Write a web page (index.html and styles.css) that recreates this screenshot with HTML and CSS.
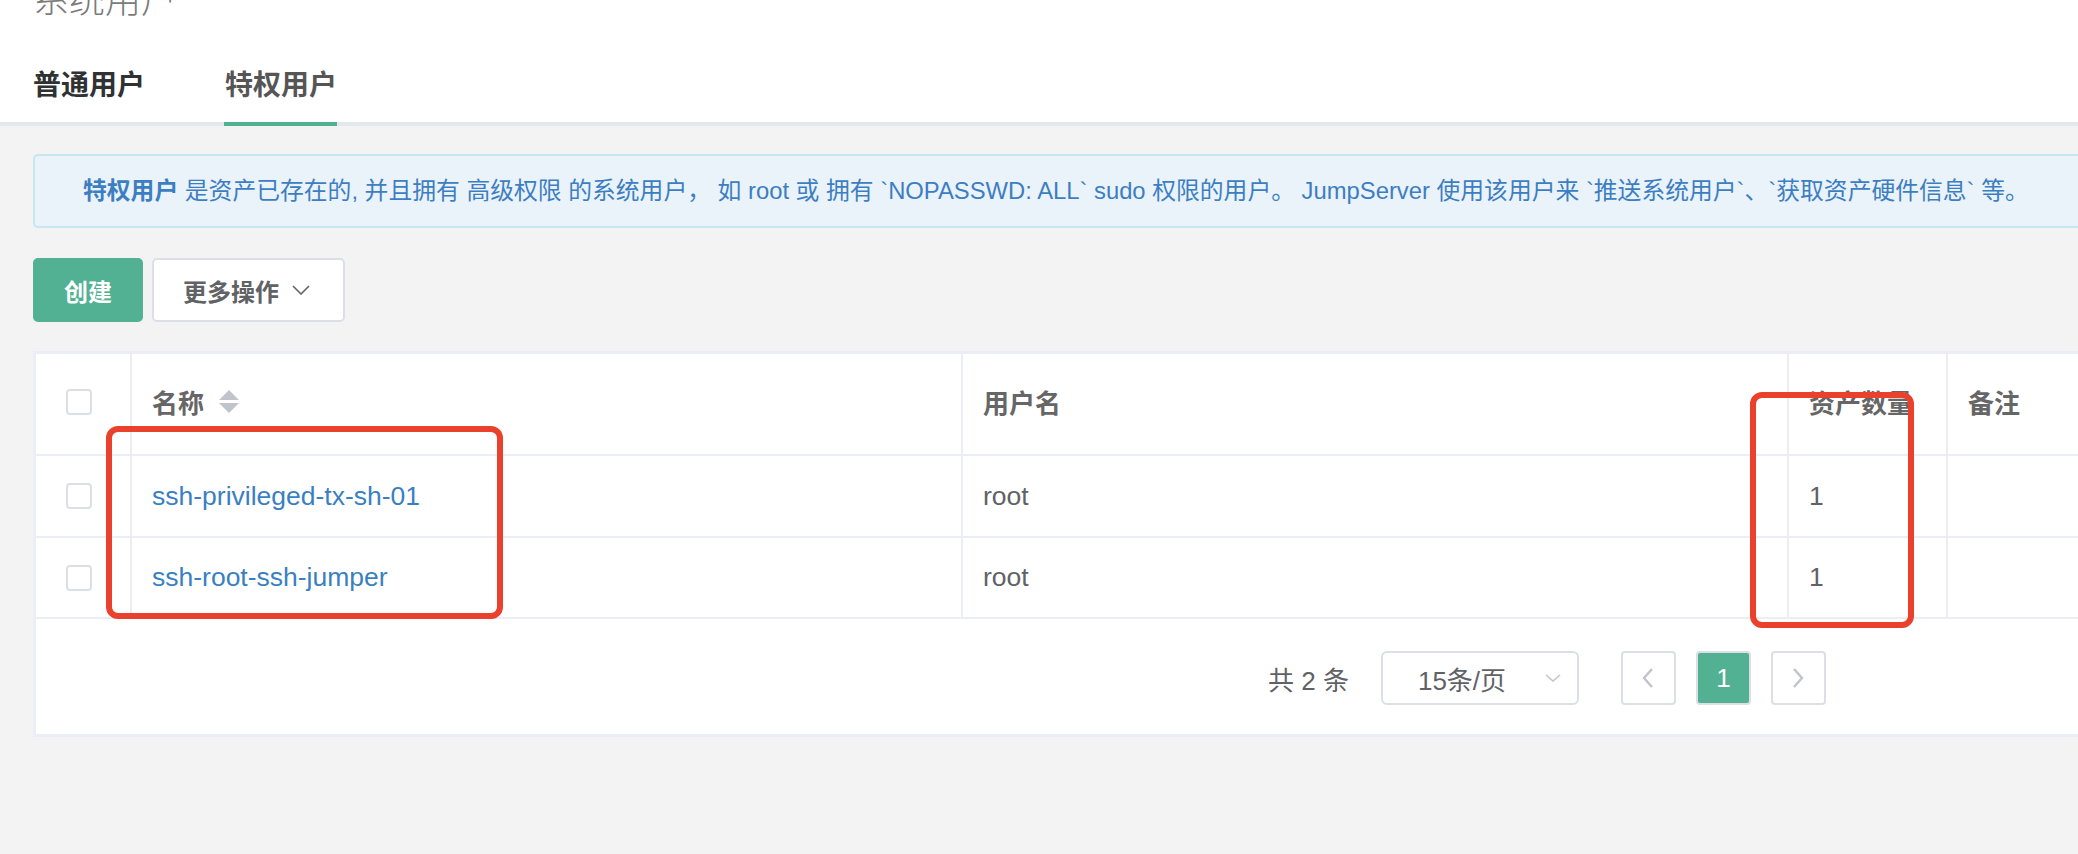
FILE: index.html
```html
<!DOCTYPE html>
<html lang="zh-CN">
  <head>
    <meta charset="UTF-8" />
    <title>系统用户</title>
    <link rel="stylesheet" href="styles.css">
  </head>
  <body>
    <div class="page">
      <header class="page-header">
        <h2 class="page-title">系统用户</h2>
        <nav class="tabs">
          <a class="tab">普通用户</a>
          <a class="tab active">特权用户</a>
        </nav>
      </header>

      <main class="content">
        <div class="alert">
          <strong>特权用户</strong> 是资产已存在的, 并且拥有 高级权限 的系统用户， 如 root 或 拥有 `NOPASSWD: ALL` sudo 权限的用户。 JumpServer 使用该用户来 `推送系统用户`、`获取资产硬件信息` 等。
        </div>

        <div class="actions">
          <button class="btn btn-primary">创建</button>
          <button class="btn btn-default">
            更多操作
            <svg class="caret" width="18" height="10" viewBox="0 0 18 10"><path d="M1 1 L9 9 L17 1" fill="none" stroke="#606266" stroke-width="1.6"/></svg>
          </button>
        </div>

        <div class="card">
          <div class="table">
            <div class="cell head check"><span class="checkbox"></span></div>
            <div class="cell head">
              名称
              <svg class="sort" width="20" height="23" viewBox="0 0 20 23"><path d="M0 10 L10 0 L20 10 Z M0 13 L20 13 L10 23 Z" fill="#c0c4cc"/></svg>
            </div>
            <div class="cell head">用户名</div>
            <div class="cell head">资产数量</div>
            <div class="cell head">备注</div>

            <div class="cell check"><span class="checkbox"></span></div>
            <div class="cell"><a class="link">ssh-privileged-tx-sh-01</a></div>
            <div class="cell">root</div>
            <div class="cell">1</div>
            <div class="cell"></div>

            <div class="cell check"><span class="checkbox"></span></div>
            <div class="cell"><a class="link">ssh-root-ssh-jumper</a></div>
            <div class="cell">root</div>
            <div class="cell">1</div>
            <div class="cell"></div>
          </div>

          <div class="pagination">
            <span class="total">共 2 条</span>
            <div class="page-size">
              <span>15条/页</span>
              <svg width="16" height="8" viewBox="0 0 16 8"><path d="M1 1 L8 7 L15 1" fill="none" stroke="#c0c4cc" stroke-width="1.6"/></svg>
            </div>
            <button class="pager">
              <svg width="12" height="20" viewBox="0 0 12 20"><path d="M10 1 L2 10 L10 19" fill="none" stroke="#c0c4cc" stroke-width="2.4"/></svg>
            </button>
            <button class="pager current">1</button>
            <button class="pager">
              <svg width="12" height="20" viewBox="0 0 12 20"><path d="M2 1 L10 10 L2 19" fill="none" stroke="#c0c4cc" stroke-width="2.4"/></svg>
            </button>
          </div>
        </div>
      </main>

      <div class="mark mark-name"></div>
      <div class="mark mark-count"></div>
    </div>
  </body>
</html>
```

FILE: styles.css
```css
html,
body {
  margin: 0;
  overflow: hidden;
}
body {
  font-family: 'Liberation Sans', 'Noto Sans CJK SC', sans-serif;
  background-color: #f3f3f4;
  color: #606266;
}
.page {
  position: relative;
  width: 2300px;
}
.page-header {
  display: flow-root;
  background-color: #fff;
  padding: 0 33px;
  border-bottom: 4px solid #e4e7ed;
}
.page-title {
  margin: -17px 0 31px;
  font-size: 36px;
  line-height: 36px;
  font-weight: 300;
  color: #7a7a7a;
}
.tabs {
  display: flex;
  height: 72px;
}
.tab {
  position: relative;
  padding: 0 40px;
  font-size: 28px;
  line-height: 72px;
  font-weight: bold;
  color: #303133;
}
.tab:first-child {
  padding-left: 0;
}
.tab.active {
  color: #555;
}
.tab.active::after {
  content: '';
  position: absolute;
  left: 39px;
  right: 40px;
  bottom: -4px;
  height: 4px;
  background-color: #53b193;
}
.content {
  padding: 28px 33px;
}
.alert {
  height: 74px;
  box-sizing: border-box;
  padding: 0 48px;
  border: 2px solid #c6e6f2;
  border-radius: 5px;
  background-color: #eaf3fa;
  color: #3d7ec3;
  font-size: 23.8px;
  line-height: 70px;
  white-space: nowrap;
}
.actions {
  display: flex;
  gap: 9px;
  margin-top: 30px;
}
.btn {
  display: flex;
  align-items: center;
  height: 64px;
  box-sizing: border-box;
  border-radius: 5px;
  font-family: inherit;
  font-size: 24px;
  font-weight: bold;
}
.btn-primary {
  padding: 0 29px;
  border: 2px solid #53b193;
  background-color: #53b193;
  color: #fff;
}
.btn-default {
  gap: 13px;
  padding: 0 33px 0 29px;
  border: 2px solid #dcdfe6;
  background-color: #fff;
  color: #606266;
}
.card {
  margin-top: 29px;
  background-color: #fff;
  border: 3px solid #ebeef5;
  border-right: none;
}
.table {
  display: grid;
  grid-template-columns: 96px 831px 826px 159px 400px;
  grid-template-rows: 102px 82px 81px;
}
.cell {
  display: flex;
  align-items: center;
  gap: 15px;
  padding-left: 20px;
  box-sizing: border-box;
  border-right: 2px solid #ebeef5;
  border-bottom: 2px solid #ebeef5;
  font-size: 26.5px;
  color: #606266;
  white-space: nowrap;
}
.cell.head {
  padding-bottom: 5px;
  font-size: 26px;
  font-weight: bold;
  color: #666;
}
.cell.check {
  padding-left: 30px;
}
.checkbox {
  width: 26px;
  height: 26px;
  box-sizing: border-box;
  border: 2px solid #dcdfe6;
  border-radius: 4px;
  background-color: #fff;
}
.link {
  color: #3a7fc2;
}
.pagination {
  display: flex;
  align-items: center;
  padding: 32px 0 29px 1232px;
  font-size: 26px;
}
.total {
  margin-right: 32px;
}
.page-size {
  display: flex;
  align-items: center;
  justify-content: space-between;
  width: 198px;
  height: 54px;
  box-sizing: border-box;
  padding: 0 16px 0 35px;
  margin-right: 42px;
  border: 2px solid #dcdfe6;
  border-radius: 6px;
}
.pager {
  display: flex;
  align-items: center;
  justify-content: center;
  width: 55px;
  height: 54px;
  margin-right: 20px;
  padding: 0;
  box-sizing: border-box;
  border: 2px solid #dcdfe6;
  border-radius: 4px;
  background-color: #fff;
  font-family: inherit;
  font-size: 26px;
  color: #606266;
}
.pager.current {
  background-color: #53b193;
  color: #fff;
}
.mark {
  position: absolute;
  box-sizing: border-box;
  border: 6px solid #e9412b;
  border-radius: 12px;
}
.mark-name {
  left: 106px;
  top: 426px;
  width: 397px;
  height: 193px;
}
.mark-count {
  left: 1750px;
  top: 392px;
  width: 164px;
  height: 236px;
}
```
